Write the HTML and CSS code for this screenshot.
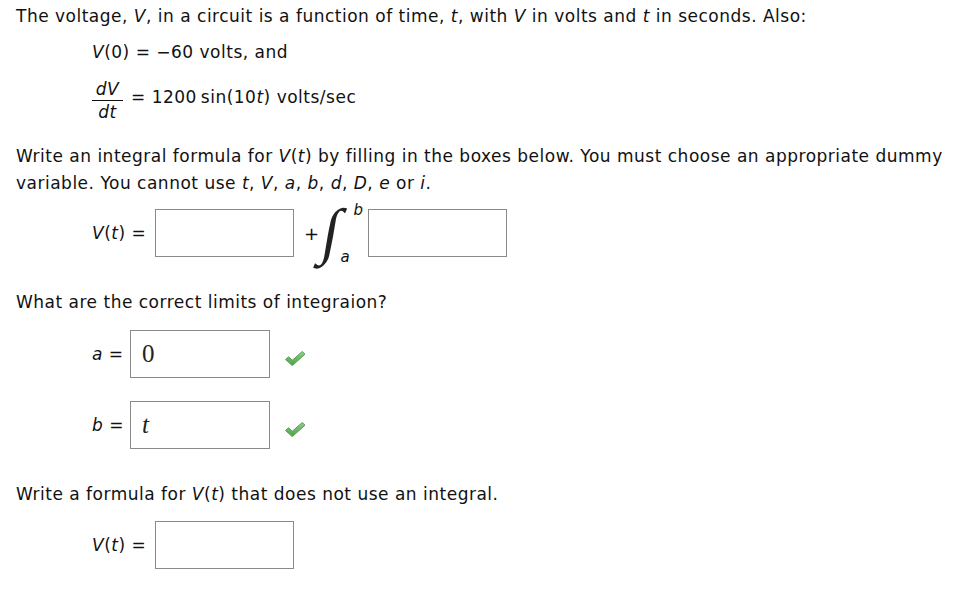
FILE: index.html
```html
<!DOCTYPE html>
<html>
<head>
<meta charset="utf-8">
<link rel="stylesheet" href="styles.css">
</head>
<body>
<div class="page">
  <p class="line first">The voltage, <i>V</i>, in a circuit is a function of time, <i>t</i>, with <i>V</i> in volts and <i>t</i> in seconds. Also:</p>
  <div class="given">
    <div class="given-line"><i>V</i>(0) = −60 volts, and</div>
    <div class="given-frac">
      <span class="frac"><span class="num"><i>dV</i></span><span class="den"><i>dt</i></span></span>
      <span class="rhs">= 1200&#8201;sin(10<i>t</i>) volts/sec</span>
    </div>
  </div>

  <p class="para nowrap">Write an integral formula for <i>V</i>(<i>t</i>) by filling in the boxes below. You must choose an appropriate dummy<br>variable. You cannot use <i>t</i>, <i>V</i>, <i>a</i>, <i>b</i>, <i>d</i>, <i>D</i>, <i>e</i> or <i>i</i>.</p>

  <div class="eq-row int-row">
    <span class="label"><i>V</i>(<i>t</i>) =</span>
    <span class="box"></span>
    <span class="plus">+</span>
    <span class="integral">
      <span class="int-sign">∫</span>
      <span class="limits"><i class="up">b</i><i class="lo">a</i></span>
    </span>
    <span class="box"></span>
  </div>

  <p class="para q2">What are the correct limits of integraion?</p>

  <div class="eq-row lim-row">
    <span class="lim-label"><i>a</i> =</span>
    <span class="box lim-box"><span class="val">0</span></span>
    <svg class="check" width="22" height="17" viewBox="0 0 22 17"><defs><linearGradient id="g1" x1="0" y1="0" x2="0" y2="1"><stop offset="0" stop-color="#8fd18a"/><stop offset="1" stop-color="#4c9e48"/></linearGradient></defs><path d="M1.5 9.5 L4.5 6.8 L8.3 10.2 L18.3 1.5 L21 4.2 L8.3 15.6 Z" fill="url(#g1)" stroke="#5a9e55" stroke-width="1" stroke-linejoin="round"/></svg>
  </div>

  <div class="eq-row lim-row second">
    <span class="lim-label"><i>b</i> =</span>
    <span class="box lim-box"><span class="val"><i>t</i></span></span>
    <svg class="check" width="22" height="17" viewBox="0 0 22 17"><defs><linearGradient id="g2" x1="0" y1="0" x2="0" y2="1"><stop offset="0" stop-color="#8fd18a"/><stop offset="1" stop-color="#4c9e48"/></linearGradient></defs><path d="M1.5 9.5 L4.5 6.8 L8.3 10.2 L18.3 1.5 L21 4.2 L8.3 15.6 Z" fill="url(#g2)" stroke="#5a9e55" stroke-width="1" stroke-linejoin="round"/></svg>
  </div>

  <p class="para q3">Write a formula for <i>V</i>(<i>t</i>) that does not use an integral.</p>

  <div class="eq-row final-row">
    <span class="label"><i>V</i>(<i>t</i>) =</span>
    <span class="box"></span>
  </div>
</div>
</body>
</html>
```

FILE: styles.css
```css
html, body {
  margin: 0;
  padding: 0;
  background: #ffffff;
}

.page {
  padding: 3px 16px 0 16px;
  font-family: "DejaVu Sans", Verdana, sans-serif;
  font-size: 17px;
  letter-spacing: 0.5px;
  color: #111111;
}

.page i {
  font-style: italic;
}

p {
  margin: 0;
}

.nowrap {
  white-space: nowrap;
}

.line {
  line-height: 27px;
}

.given {
  margin-left: 76px;
  margin-top: 9px;
}

.given-line {
  line-height: 27px;
}

.given-frac {
  display: flex;
  align-items: center;
  margin-top: 14px;
}

.frac {
  display: inline-flex;
  flex-direction: column;
  align-items: center;
  width: 31px;
}

.num {
  line-height: 18px;
  padding-bottom: 2px;
  border-bottom: 1px solid #111111;
  width: 100%;
  text-align: center;
}

.den {
  line-height: 18px;
  padding-top: 2px;
}

.rhs {
  margin-left: 8px;
  line-height: 27px;
  margin-top: -6px;
}

.para {
  line-height: 27px;
  margin-top: 22px;
}

.eq-row {
  display: flex;
  align-items: center;
  margin-left: 76px;
}

.int-row {
  margin-top: 12px;
  height: 48px;
}

.label {
  width: 63px;
  flex: none;
  white-space: nowrap;
}

.box {
  display: block;
  width: 137px;
  height: 46px;
  border: 1px solid #8a8a8a;
  flex: none;
  box-sizing: content-box;
}

.plus {
  margin-left: 10px;
  width: 15px;
  font-size: 18px;
}

.integral {
  display: flex;
  align-items: center;
  height: 60px;
  margin-left: 4px;
}

.int-sign {
  font-family: "Liberation Serif", "Times New Roman", serif;
  font-style: normal;
  font-size: 62px;
  line-height: 60px;
  color: #222222;
  margin-top: -4px;
  transform: skewX(-10deg);
}

.limits {
  display: flex;
  flex-direction: column;
  justify-content: space-between;
  align-self: stretch;
  font-size: 15px;
  line-height: 16px;
  width: 29px;
  margin-left: -1px;
}

.limits .up {
  margin-left: 14px;
  margin-top: -1px;
}

.limits .lo {
  margin-bottom: -2px;
  margin-left: 1px;
}

.q2 {
  margin-top: 32px;
}

.lim-row {
  margin-top: 14px;
}

.lim-row.second {
  margin-top: 23px;
}

.lim-label {
  width: 38px;
  flex: none;
  white-space: nowrap;
}

.lim-box {
  width: 138px;
  display: flex;
  align-items: center;
}

.val {
  font-family: "Liberation Serif", "Times New Roman", serif;
  font-size: 25px;
  margin-left: 11px;
  color: #222222;
}

.check {
  margin-left: 14px;
  margin-top: 8px;
  flex: none;
}

.q3 {
  margin-top: 32px;
}

.final-row {
  margin-top: 13px;
}
```
